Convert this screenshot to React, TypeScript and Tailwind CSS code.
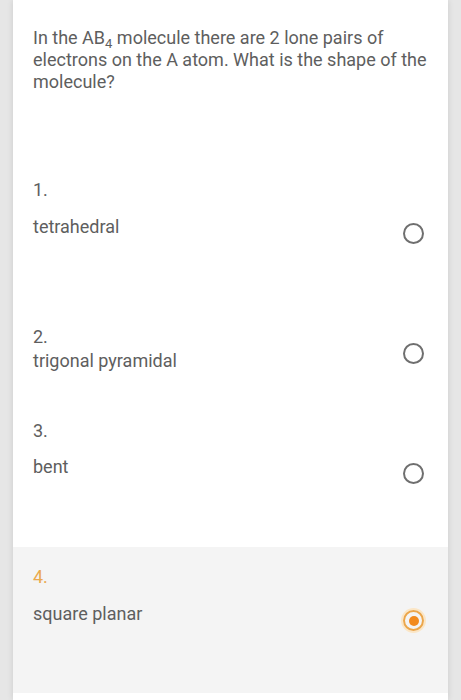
import React from 'react';

const Radio = ({ checked }: { checked?: boolean }) =>
  checked ? (
    <div className="w-[21px] h-[21px] rounded-full border-[2.5px] border-[#eca64a] flex items-center justify-center shadow-[0_0_0_2px_#fbe6c6]">
      <div className="w-[10px] h-[10px] rounded-full bg-[#f28a1e]" />
    </div>
  ) : (
    <div className="w-[21px] h-[21px] rounded-full border-[2.5px] border-[#6f6f6f]" />
  );

const App = () => {
  return (
    <div
      className="min-h-[700px] bg-[#e6e6e6] px-[13px] text-[#5e5e5e]"
      style={{ fontFamily: 'Roboto, "Liberation Sans", sans-serif' }}
    >
      <div className="bg-white min-h-[700px] shadow-[0_0_6px_rgba(0,0,0,0.12)]">
        {/* Question */}
        <div className="h-[160px] pt-[27px] px-[20px] text-[18px] leading-[22px]">
          In the AB<span className="relative top-[4px] text-[13px] leading-none">4</span> molecule there are 2 lone pairs of
          electrons on the A atom. What is the shape of the molecule?
        </div>

        {/* Option 1 */}
        <div className="h-[146px] flex pl-[20px] pr-[24px] pt-[19px]">
          <div className="flex-1 text-[18px] leading-[22px]">
            <div>1.</div>
            <div className="mt-[15px]">tetrahedral</div>
          </div>
          <div className="mt-[44px]">
            <Radio />
          </div>
        </div>

        {/* Option 2 */}
        <div className="h-[94px] flex pl-[20px] pr-[24px] pt-[20px]">
          <div className="flex-1 text-[18px] leading-[22px]">
            <div>2.</div>
            <div className="mt-[2px]">trigonal pyramidal</div>
          </div>
          <div className="mt-[17px]">
            <Radio />
          </div>
        </div>

        {/* Option 3 */}
        <div className="h-[147px] flex pl-[20px] pr-[24px] pt-[20px]">
          <div className="flex-1 text-[18px] leading-[22px]">
            <div>3.</div>
            <div className="mt-[14px]">bent</div>
          </div>
          <div className="mt-[43px]">
            <Radio />
          </div>
        </div>

        {/* Option 4 (selected) */}
        <div className="h-[146px] flex pl-[20px] pr-[24px] pt-[19px] bg-[#f4f4f4]">
          <div className="flex-1 text-[18px] leading-[22px]">
            <div className="text-[#eaa94e]">4.</div>
            <div className="mt-[15px]">square planar</div>
          </div>
          <div className="mt-[44px]">
            <Radio checked />
          </div>
        </div>
      </div>
    </div>
  );
};

export default App;
